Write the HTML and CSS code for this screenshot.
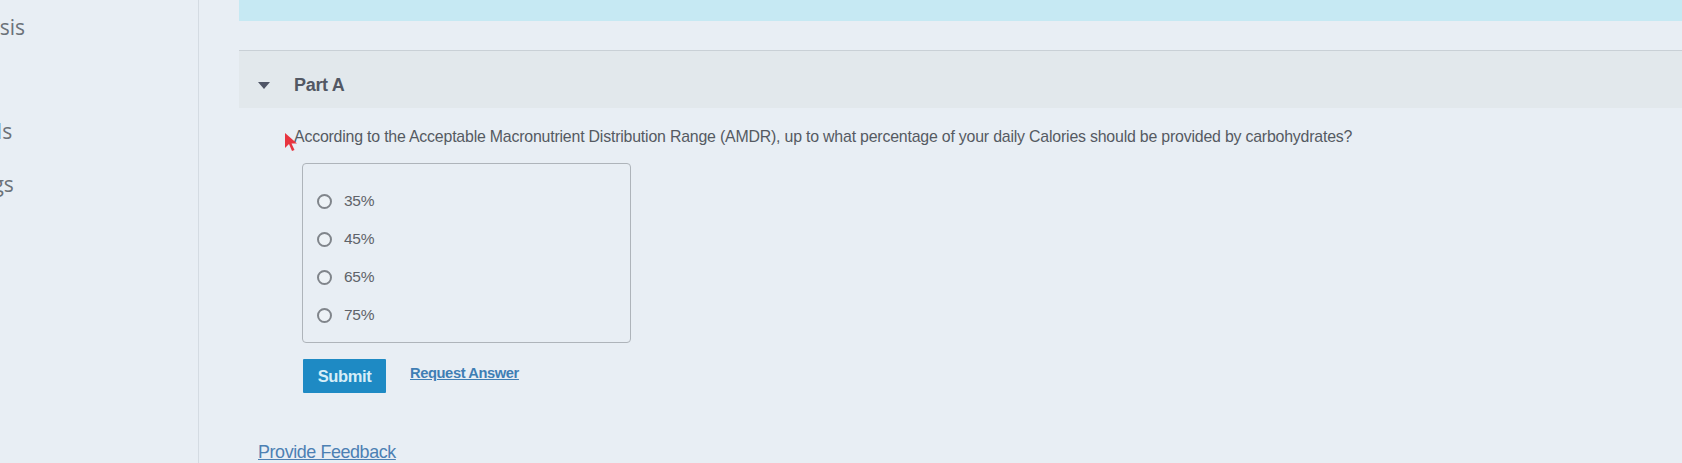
FILE: index.html
```html
<!DOCTYPE html>
<html>
<head>
<meta charset="utf-8">
<link rel="stylesheet" href="styles.css">
</head>
<body>
<div class="page">
  <aside class="sidebar">
    <div class="nav-item first">Analysis</div>
    <div class="nav-item second">Tools</div>
    <div class="nav-item third">Settings</div>
  </aside>
  <main class="main">
    <div class="banner"></div>
    <div class="spacer"></div>
    <section class="part">
      <div class="part-header">
        <span class="caret"></span>
        <span class="part-title">Part A</span>
      </div>
      <div class="part-body">
        <p class="question"><span class="cursor"><svg width="14" height="20" viewBox="0 0 14 20"><path d="M1 1 L1 16 L5 12 L8 19 L10.5 18 L7.5 11.5 L13 11.5 Z" fill="#e8343f"/></svg></span>According to the Acceptable Macronutrient Distribution Range (AMDR), up to what percentage of your daily Calories should be provided by carbohydrates?</p>
        <div class="choices">
          <label class="choice"><span class="radio"></span><span>35%</span></label>
          <label class="choice"><span class="radio"></span><span>45%</span></label>
          <label class="choice"><span class="radio"></span><span>65%</span></label>
          <label class="choice"><span class="radio"></span><span>75%</span></label>
        </div>
        <div class="actions">
          <button class="submit">Submit</button>
          <a class="request" href="#">Request Answer</a>
        </div>
      </div>
    </section>
    <a class="feedback" href="#">Provide Feedback</a>
  </main>
</div>
</body>
</html>
```
FILE: styles.css
```css
html, body {
  margin: 0;
  padding: 0;
  height: 100%;
}
body {
  background: #e8eef4;
  font-family: "Liberation Sans", Arial, sans-serif;
  overflow: hidden;
}
.page {
  display: flex;
  height: 463px;
}
.sidebar {
  width: 198px;
  flex: none;
  border-right: 1px solid #d4dbe2;
  overflow: hidden;
  font-family: "Open Sans", "DejaVu Sans", sans-serif;
  font-size: 21px;
  color: #6c7279;
}
.nav-item {
  white-space: nowrap;
  line-height: 24px;
}
.nav-item.first {
  margin-top: 15px;
  margin-left: -54px;
}
.nav-item.second {
  margin-top: 80px;
  margin-left: -40px;
}
.nav-item.third {
  margin-top: 29px;
  margin-left: -64px;
}
.main {
  flex: 1;
  margin-left: 40px;
  display: flex;
  flex-direction: column;
}
.banner {
  height: 21px;
  background: #c6e9f3;
}
.spacer {
  height: 29px;
}
.part-header {
  border-top: 1px solid #c9d0d6;
  background: #e2e8ec;
  height: 58px;
  display: flex;
  align-items: center;
  padding-left: 19px;
  padding-top: 11px;
  box-sizing: border-box;
}
.caret {
  width: 0;
  height: 0;
  border-left: 6px solid transparent;
  border-right: 6px solid transparent;
  border-top: 7px solid #4f5566;
  margin-right: 24px;
  margin-top: 0;
}
.part-title {
  font-weight: bold;
  font-size: 18px;
  color: #535864;
  letter-spacing: -0.3px;
}
.part-body {
  padding-left: 55px;
}
.question {
  position: relative;
  margin: 20px 0 0 0;
  font-size: 15.9px;
  color: #555a62;
  letter-spacing: -0.2px;
  line-height: 18px;
}
.cursor {
  position: absolute;
  left: -10px;
  top: 4px;
  line-height: 0;
}
.choices {
  margin-top: 17px;
  margin-left: 8px;
  width: 329px;
  height: 180px;
  box-sizing: border-box;
  border: 1px solid #aeb4ba;
  border-radius: 4px;
  padding: 28px 0 0 14px;
  display: flex;
  flex-direction: column;
  gap: 20px;
}
.choice {
  display: flex;
  align-items: center;
  font-size: 15.5px;
  color: #5f6369;
  height: 18px;
  letter-spacing: -0.3px;
}
.radio {
  width: 11px;
  height: 11px;
  border: 2px solid #80858b;
  border-radius: 50%;
  margin-right: 12px;
  box-sizing: content-box;
  background: #edf2f6;
}
.actions {
  display: flex;
  align-items: center;
  margin-top: 16px;
  margin-left: 9px;
}
.submit {
  width: 83px;
  height: 34px;
  background: #1e8ac4;
  border: none;
  color: #d6eef8;
  font-family: "Liberation Sans", Arial, sans-serif;
  font-weight: bold;
  font-size: 16.5px;
  letter-spacing: -0.4px;
  padding: 0;
  border-radius: 1px;
}
.request {
  margin-left: 24px;
  color: #3f7eb4;
  font-weight: bold;
  font-size: 14.7px;
  letter-spacing: -0.4px;
  margin-top: -6px;
}
.feedback {
  margin-top: 49px;
  margin-left: 19px;
  align-self: flex-start;
  color: #4c80b3;
  font-size: 17.9px;
  letter-spacing: -0.4px;
}
```
